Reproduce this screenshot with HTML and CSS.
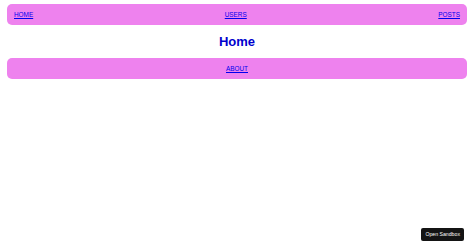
FILE: index.html
```html
<!DOCTYPE html>
<html>
<head>
<meta charset="utf-8">
<link rel="stylesheet" href="styles.css">
</head>
<body>
<nav class="bar top">
  <a href="#">HOME</a>
  <a href="#">USERS</a>
  <a href="#">POSTS</a>
</nav>
<h1 class="title">Home</h1>
<nav class="bar bottom">
  <a href="#">ABOUT</a>
</nav>
<a class="sandbox" href="#">Open Sandbox</a>
</body>
</html>
```
FILE: styles.css
```css
html, body {
  margin: 0;
  padding: 0;
  background: #fff;
}
body {
  padding: 4px 7px 0 7px;
  font-family: "Liberation Sans", Arial, sans-serif;
}
.bar {
  background: #ee82ee;
  border-radius: 5px;
  height: 21px;
  display: flex;
  align-items: center;
  padding: 0 7px;
  font-size: 6.4px;
}
.bar a {
  color: #0000ee;
  text-decoration: underline;
}
.top {
  justify-content: space-between;
}
.bottom {
  justify-content: center;
}
.title {
  margin: 0;
  height: 33px;
  display: flex;
  align-items: center;
  justify-content: center;
  font-size: 13px;
  font-weight: bold;
  color: #0000cd;
}
.sandbox {
  position: fixed;
  right: 10px;
  bottom: 7px;
  background: #141414;
  color: #fff;
  font-size: 5.2px;
  text-decoration: none;
  padding: 4px 4px;
  border-radius: 2px;
  line-height: 5px;
}
```
